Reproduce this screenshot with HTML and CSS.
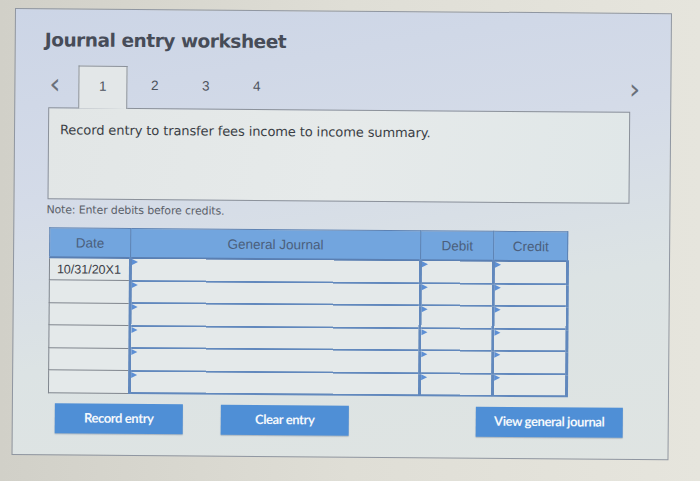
FILE: index.html
```html
<!DOCTYPE html>
<html>
<head>
<meta charset="utf-8">
<link rel="stylesheet" href="styles.css">
</head>
<body>
<div class="panel">
  <h1 class="title">Journal entry worksheet</h1>
  <div class="nav">
    <span class="arrow">&lsaquo;</span>
    <div class="tabs">
      <span class="tab active">1</span>
      <span class="tab">2</span>
      <span class="tab">3</span>
      <span class="tab">4</span>
    </div>
    <span class="arrow next">&rsaquo;</span>
  </div>
  <div class="prompt">Record entry to transfer fees income to income summary.</div>
  <p class="note">Note: Enter debits before credits.</p>
  <table class="journal">
    <thead>
      <tr><th class="c-date">Date</th><th class="c-acct">General Journal</th><th class="c-num">Debit</th><th class="c-num">Credit</th></tr>
    </thead>
    <tbody>
      <tr><td class="c-date">10/31/20X1</td><td class="in"></td><td class="in"></td><td class="in"></td></tr>
      <tr><td class="c-date"></td><td class="in"></td><td class="in"></td><td class="in"></td></tr>
      <tr><td class="c-date"></td><td class="in"></td><td class="in"></td><td class="in"></td></tr>
      <tr><td class="c-date"></td><td class="in"></td><td class="in"></td><td class="in"></td></tr>
      <tr><td class="c-date"></td><td class="in"></td><td class="in"></td><td class="in"></td></tr>
      <tr><td class="c-date"></td><td class="in"></td><td class="in"></td><td class="in"></td></tr>
    </tbody>
  </table>
  <div class="actions">
    <button class="btn">Record entry</button>
    <button class="btn">Clear entry</button>
    <button class="btn wide">View general journal</button>
  </div>
</div>
</body>
</html>
```
FILE: styles.css
```css
html, body {
  margin: 0;
  padding: 0;
}
body {
  width: 700px;
  height: 481px;
  background: linear-gradient(90deg, #d1d0c8 0%, #dfded6 50%, #e6e5dd 100%);
  font-family: "DejaVu Sans", Verdana, sans-serif;
  overflow: hidden;
}
.panel {
  box-sizing: border-box;
  margin: 8px 0 0 15px;
  width: 657px;
  height: 447px;
  border: 1px solid #8f96a1;
  background: linear-gradient(170deg, #ccd5e6 0%, #d4dbe8 35%, #dce3e4 65%, #dfe4e2 100%);
  padding: 19px 0 0 33px;
  transform: rotate(0.45deg);
  transform-origin: 0 0;
}
.title {
  margin: 0 0 0 -4px;
  font-size: 18.5px;
  font-weight: bold;
  color: #474c58;
  letter-spacing: -0.45px;
  line-height: 24px;
}
.nav {
  display: flex;
  align-items: flex-end;
  margin-top: 13px;
  width: 592px;
  height: 42px;
}
.arrow {
  width: 30px;
  font-size: 28px;
  line-height: 26px;
  color: #6a707a;
  align-self: center;
  padding-left: 1px;
  margin-top: -4px;
  box-sizing: border-box;
}
.arrow.next {
  margin-left: auto;
  width: auto;
  margin-top: -2px;
}
.tabs {
  display: flex;
  height: 42px;
}
.tab {
  box-sizing: border-box;
  width: 51px;
  height: 42px;
  display: flex;
  align-items: center;
  justify-content: center;
  font-family: "Liberation Sans", Arial, sans-serif;
  font-size: 13.5px;
  color: #4d535d;
  padding-bottom: 4px;
}
.tab.active {
  width: 49px;
  margin-right: 2px;
  background: #e3e7e8;
  border: 1px solid #8b919a;
  border-bottom: none;
  height: 43px;
  margin-bottom: -1px;
  position: relative;
  z-index: 1;
}
.prompt {
  box-sizing: border-box;
  width: 582px;
  height: 92px;
  background: linear-gradient(100deg, #e2e6e6 0%, #e6eaea 50%, #e0e7e8 100%);
  border: 1px solid #8b919a;
  padding: 14px 0 0 11px;
  font-size: 13px;
  color: #3a3e45;
  letter-spacing: -0.1px;
}
.note {
  margin: 4px 0 0 -1px;
  font-size: 11px;
  color: #5a6069;
  letter-spacing: -0.15px;
}
.journal {
  margin: 11px 0 0 2px;
  border-collapse: collapse;
  width: 520px;
  font-family: "Liberation Sans", Arial, sans-serif;
}
.journal th {
  background: #72a5de;
  color: #4b5f7c;
  font-size: 13.5px;
  font-weight: normal;
  height: 28px;
  padding: 0;
  border: 1px solid #5d82b3;
  border-bottom: 2px solid #5a7fb2;
}
.journal .c-date { width: 80px; }
.journal .c-acct { width: 292px; }
.journal .c-num { width: 73px; }
.journal td {
  height: 20.5px;
  padding: 0;
  background: #e4e9ea;
}
.journal td.c-date {
  border: 1px solid #80868e;
  font-size: 12.5px;
  color: #3c4048;
  padding-left: 7px;
  box-sizing: border-box;
}
.journal td.in {
  border: 3px solid #6188bd;
  border-top-width: 2px;
  border-bottom-width: 2px;
  position: relative;
}
.journal td.in::before {
  content: "";
  position: absolute;
  left: 0;
  top: 0;
  border-left: 6px solid #5d8fd4;
  border-top: 3px solid transparent;
  border-bottom: 3px solid transparent;
}
.actions {
  display: flex;
  margin-top: 10px;
  padding-left: 9px;
}
.btn {
  height: 30px;
  width: 128px;
  border: none;
  background: #4f8fd6;
  color: #f4f8fc;
  font-family: Lato, "Liberation Sans", sans-serif;
  font-weight: bold;
  font-size: 13px;
  letter-spacing: -0.4px;
  padding: 0 0 3px 0;
  box-shadow: 0 1px 1px rgba(60, 80, 110, 0.3);
}
.btn + .btn {
  margin-left: 38px;
}
.btn.wide {
  width: 147px;
  margin-left: 127px;
}
```
